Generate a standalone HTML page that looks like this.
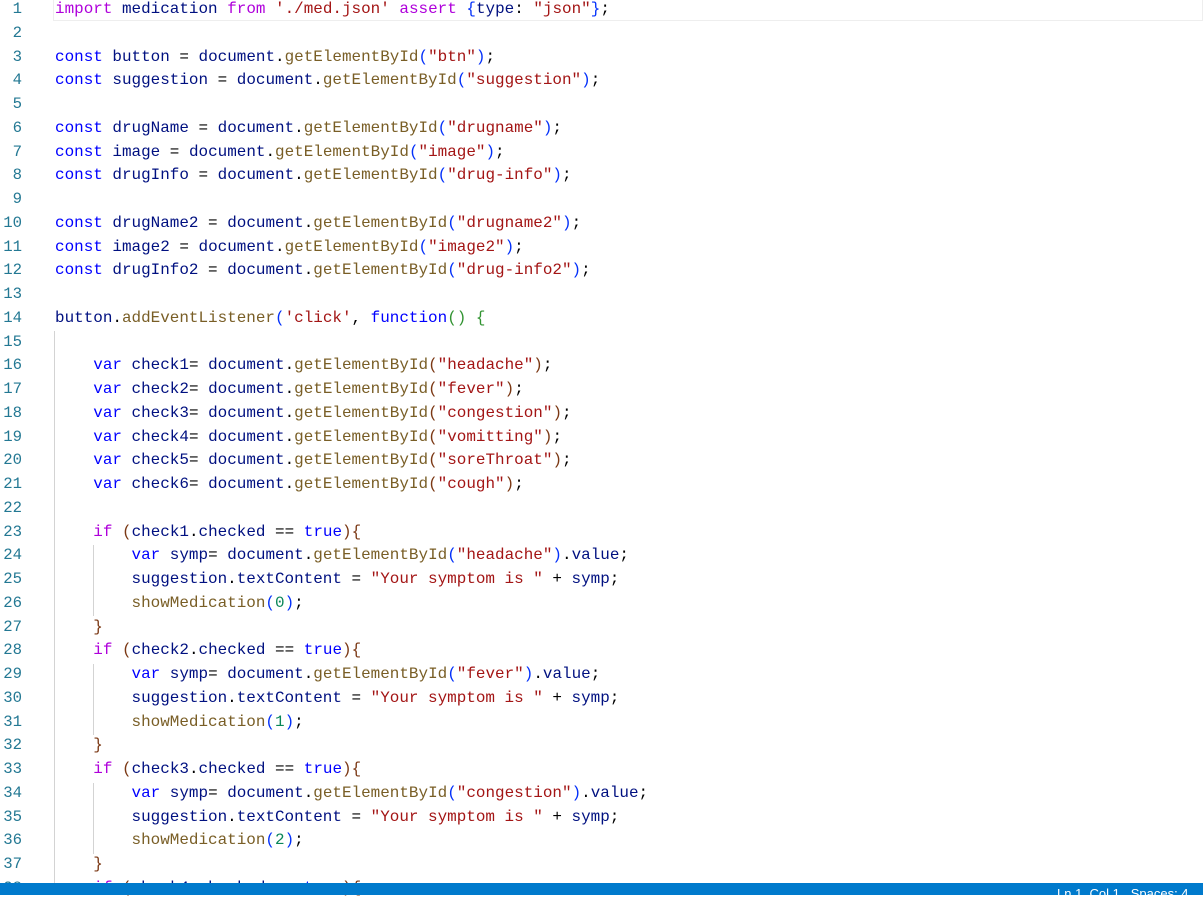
<!DOCTYPE html>
<html><head><style>
body{margin:0;width:1203px;height:895px;overflow:hidden;background:#fff;position:relative;font-family:"Liberation Mono",monospace;font-size:15.95px;}
.cur{position:absolute;left:53px;top:-1px;width:1150px;height:22px;border:1px solid #eeeeee;box-sizing:border-box}
.gut{position:absolute;left:0;top:-2px;width:22px;text-align:right;color:#237893;line-height:23.75px;white-space:pre;font-size:15.65px}
.code{position:absolute;left:55px;top:-2px;white-space:pre;color:#000;margin:0;font-family:"Liberation Mono",monospace;font-size:15.95px;line-height:23.75px}
.g{position:absolute;width:1px;background:#d3d3d3}
.k{color:#0000ff}.c{color:#af00db}.s{color:#a31515}.v{color:#001080}.f{color:#795e26}.n{color:#098658}
.b1{color:#0431fa}.b2{color:#319331}.b3{color:#7b3814}
.status{position:absolute;left:0;top:883px;width:1203px;height:12px;background:#007acc;color:#fff;font-family:"Liberation Sans",sans-serif;font-size:13px;overflow:hidden}
.status span{position:absolute;left:1057px;top:4px;line-height:13px}
</style></head><body>
<div class="cur"></div>
<div class="g" style="left:54px;top:331px;height:552px"></div>
<div class="g" style="left:93px;top:545px;height:71px"></div>
<div class="g" style="left:93px;top:664px;height:71px"></div>
<div class="g" style="left:93px;top:783px;height:71px"></div>
<div class="gut">1
2
3
4
5
6
7
8
9
10
11
12
13
14
15
16
17
18
19
20
21
22
23
24
25
26
27
28
29
30
31
32
33
34
35
36
37
38</div>
<pre class="code"><span class="c">import</span> <span class="v">medication</span> <span class="c">from</span> <span class="s">'./med.json'</span> <span class="c">assert</span> <span class="b1">{</span><span class="v">type</span>: <span class="s">"json"</span><span class="b1">}</span>;

<span class="k">const</span> <span class="v">button</span> = <span class="v">document</span>.<span class="f">getElementById</span><span class="b1">(</span><span class="s">"btn"</span><span class="b1">)</span>;
<span class="k">const</span> <span class="v">suggestion</span> = <span class="v">document</span>.<span class="f">getElementById</span><span class="b1">(</span><span class="s">"suggestion"</span><span class="b1">)</span>;

<span class="k">const</span> <span class="v">drugName</span> = <span class="v">document</span>.<span class="f">getElementById</span><span class="b1">(</span><span class="s">"drugname"</span><span class="b1">)</span>;
<span class="k">const</span> <span class="v">image</span> = <span class="v">document</span>.<span class="f">getElementById</span><span class="b1">(</span><span class="s">"image"</span><span class="b1">)</span>;
<span class="k">const</span> <span class="v">drugInfo</span> = <span class="v">document</span>.<span class="f">getElementById</span><span class="b1">(</span><span class="s">"drug-info"</span><span class="b1">)</span>;

<span class="k">const</span> <span class="v">drugName2</span> = <span class="v">document</span>.<span class="f">getElementById</span><span class="b1">(</span><span class="s">"drugname2"</span><span class="b1">)</span>;
<span class="k">const</span> <span class="v">image2</span> = <span class="v">document</span>.<span class="f">getElementById</span><span class="b1">(</span><span class="s">"image2"</span><span class="b1">)</span>;
<span class="k">const</span> <span class="v">drugInfo2</span> = <span class="v">document</span>.<span class="f">getElementById</span><span class="b1">(</span><span class="s">"drug-info2"</span><span class="b1">)</span>;

<span class="v">button</span>.<span class="f">addEventListener</span><span class="b1">(</span><span class="s">'click'</span>, <span class="k">function</span><span class="b2">()</span> <span class="b2">{</span>

    <span class="k">var</span> <span class="v">check1</span>= <span class="v">document</span>.<span class="f">getElementById</span><span class="b3">(</span><span class="s">"headache"</span><span class="b3">)</span>;
    <span class="k">var</span> <span class="v">check2</span>= <span class="v">document</span>.<span class="f">getElementById</span><span class="b3">(</span><span class="s">"fever"</span><span class="b3">)</span>;
    <span class="k">var</span> <span class="v">check3</span>= <span class="v">document</span>.<span class="f">getElementById</span><span class="b3">(</span><span class="s">"congestion"</span><span class="b3">)</span>;
    <span class="k">var</span> <span class="v">check4</span>= <span class="v">document</span>.<span class="f">getElementById</span><span class="b3">(</span><span class="s">"vomitting"</span><span class="b3">)</span>;
    <span class="k">var</span> <span class="v">check5</span>= <span class="v">document</span>.<span class="f">getElementById</span><span class="b3">(</span><span class="s">"soreThroat"</span><span class="b3">)</span>;
    <span class="k">var</span> <span class="v">check6</span>= <span class="v">document</span>.<span class="f">getElementById</span><span class="b3">(</span><span class="s">"cough"</span><span class="b3">)</span>;

    <span class="c">if</span> <span class="b3">(</span><span class="v">check1</span>.<span class="v">checked</span> == <span class="k">true</span><span class="b3">){</span>
        <span class="k">var</span> <span class="v">symp</span>= <span class="v">document</span>.<span class="f">getElementById</span><span class="b1">(</span><span class="s">"headache"</span><span class="b1">)</span>.<span class="v">value</span>;
        <span class="v">suggestion</span>.<span class="v">textContent</span> = <span class="s">"Your symptom is "</span> + <span class="v">symp</span>;
        <span class="f">showMedication</span><span class="b1">(</span><span class="n">0</span><span class="b1">)</span>;
    <span class="b3">}</span>
    <span class="c">if</span> <span class="b3">(</span><span class="v">check2</span>.<span class="v">checked</span> == <span class="k">true</span><span class="b3">){</span>
        <span class="k">var</span> <span class="v">symp</span>= <span class="v">document</span>.<span class="f">getElementById</span><span class="b1">(</span><span class="s">"fever"</span><span class="b1">)</span>.<span class="v">value</span>;
        <span class="v">suggestion</span>.<span class="v">textContent</span> = <span class="s">"Your symptom is "</span> + <span class="v">symp</span>;
        <span class="f">showMedication</span><span class="b1">(</span><span class="n">1</span><span class="b1">)</span>;
    <span class="b3">}</span>
    <span class="c">if</span> <span class="b3">(</span><span class="v">check3</span>.<span class="v">checked</span> == <span class="k">true</span><span class="b3">){</span>
        <span class="k">var</span> <span class="v">symp</span>= <span class="v">document</span>.<span class="f">getElementById</span><span class="b1">(</span><span class="s">"congestion"</span><span class="b1">)</span>.<span class="v">value</span>;
        <span class="v">suggestion</span>.<span class="v">textContent</span> = <span class="s">"Your symptom is "</span> + <span class="v">symp</span>;
        <span class="f">showMedication</span><span class="b1">(</span><span class="n">2</span><span class="b1">)</span>;
    <span class="b3">}</span>
    <span class="c">if</span> <span class="b3">(</span><span class="v">check4</span>.<span class="v">checked</span> == <span class="k">true</span><span class="b3">){</span></pre>
<div class="status"><span>Ln 1, Col 1&nbsp;&nbsp;&nbsp;Spaces: 4</span></div>
</body></html>
